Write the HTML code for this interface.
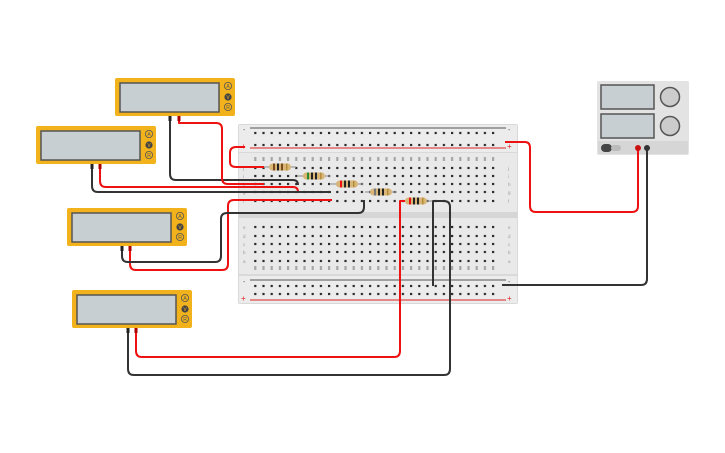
<!DOCTYPE html>
<html><head><style>html,body{margin:0;padding:0;background:#fff;width:725px;height:453px;overflow:hidden}</style></head>
<body>
<svg width="725" height="453" viewBox="0 0 725 453" xmlns="http://www.w3.org/2000/svg" font-family="Liberation Sans, sans-serif">
<defs>
<g id="meter">
<rect x="0" y="0" width="120" height="38" rx="2" fill="#f2b21c"/>
<rect x="5" y="5" width="99" height="29" fill="#c8cfd2" stroke="#555" stroke-width="1.5"/>
<circle cx="113" cy="8" r="3.6" fill="none" stroke="#555" stroke-width="0.8"/>
<text x="113" y="10" font-size="5" text-anchor="middle" fill="#555">A</text>
<circle cx="113" cy="19" r="3.6" fill="#444"/>
<text x="113" y="21" font-size="5" text-anchor="middle" fill="#f2b21c">V</text>
<circle cx="113" cy="29" r="3.6" fill="none" stroke="#555" stroke-width="0.8"/>
<text x="113" y="31" font-size="5" text-anchor="middle" fill="#555">R</text>
</g>
<g id="res">
<rect x="-11" y="-3.5" width="22" height="7" rx="3.5" fill="#d8b677"/>
<line x1="-16" y1="0" x2="-11" y2="0" stroke="#999" stroke-width="1.2"/>
<line x1="11" y1="0" x2="16" y2="0" stroke="#999" stroke-width="1.2"/>
</g>
<pattern id="hp" x="251.8" y="0" width="8.2" height="453" patternUnits="userSpaceOnUse">
<rect x="2.4" y="0" width="2.2" height="453" fill="#2a2a2a"/>
</pattern>
</defs>
<!-- breadboard -->
<rect x="238" y="124" width="280" height="180" rx="2" fill="#d9d9d9"/>
<rect x="239" y="153" width="278" height="121" fill="#e9e9e9"/>
<rect x="239" y="212" width="278" height="6" fill="#d6d6d6"/>
<rect x="239" y="125" width="278" height="27" fill="#ececec"/>
<rect x="239" y="276" width="278" height="27" fill="#ececec"/>
<line x1="250" y1="128" x2="506" y2="128" stroke="#555" stroke-width="1"/>
<line x1="250" y1="148" x2="506" y2="148" stroke="#d22" stroke-width="1"/>
<line x1="250" y1="280" x2="506" y2="280" stroke="#555" stroke-width="1"/>
<line x1="250" y1="300" x2="506" y2="300" stroke="#d22" stroke-width="1"/>
<g fill="#d22" font-size="8"><text x="241" y="149">+</text><text x="507" y="149">+</text><text x="241" y="301">+</text><text x="507" y="301">+</text></g>
<g fill="#555" font-size="7"><text x="243" y="132">-</text><text x="508" y="132">-</text><text x="243" y="284">-</text><text x="508" y="284">-</text></g>
<g fill="url(#hp)">
<rect x="252" y="131.9" width="246" height="2.2"/>
<rect x="252" y="143.9" width="246" height="2.2"/>
<rect x="252" y="166.9" width="246" height="2.2"/>
<rect x="252" y="174.9" width="246" height="2.2"/>
<rect x="252" y="182.9" width="246" height="2.2"/>
<rect x="252" y="190.9" width="246" height="2.2"/>
<rect x="252" y="199.9" width="246" height="2.2"/>
<rect x="252" y="225.9" width="246" height="2.2"/>
<rect x="252" y="234.9" width="246" height="2.2"/>
<rect x="252" y="242.9" width="246" height="2.2"/>
<rect x="252" y="250.9" width="246" height="2.2"/>
<rect x="252" y="259.9" width="246" height="2.2"/>
<rect x="252" y="284.9" width="246" height="2.2"/>
<rect x="252" y="292.9" width="246" height="2.2"/>
</g>
<g fill="#999" font-size="4.5">
<rect x="252" y="157" width="246" height="4" fill="url(#hp)" opacity="0.35"/>
<rect x="252" y="266" width="246" height="4" fill="url(#hp)" opacity="0.35"/>
<text x="243" y="170">j</text><text x="243" y="178">i</text><text x="243" y="186">h</text><text x="243" y="194">g</text><text x="243" y="203">f</text>
<text x="243" y="229">e</text><text x="243" y="238">d</text><text x="243" y="246">c</text><text x="243" y="254">b</text><text x="243" y="263">a</text>
<text x="508" y="170">j</text><text x="508" y="178">i</text><text x="508" y="186">h</text><text x="508" y="194">g</text><text x="508" y="203">f</text>
<text x="508" y="229">e</text><text x="508" y="238">d</text><text x="508" y="246">c</text><text x="508" y="254">b</text><text x="508" y="263">a</text>
</g>
<!-- resistors -->
<g transform="translate(280,167)"><use href="#res"/><rect x="-7" y="-3.5" width="2" height="7" fill="#7a4a1c"/><rect x="-3" y="-3.5" width="2" height="7" fill="#222"/><rect x="1" y="-3.5" width="2" height="7" fill="#7a4a1c"/><rect x="6" y="-3.5" width="1.5" height="7" fill="#b58d3a"/></g>
<g transform="translate(314,176)"><use href="#res"/><rect x="-7" y="-3.5" width="2" height="7" fill="#2a8a2a"/><rect x="-3" y="-3.5" width="2" height="7" fill="#222"/><rect x="1" y="-3.5" width="2" height="7" fill="#222"/><rect x="6" y="-3.5" width="1.5" height="7" fill="#b58d3a"/></g>
<g transform="translate(347,184)"><use href="#res"/><rect x="-7" y="-3.5" width="2" height="7" fill="#e11"/><rect x="-3" y="-3.5" width="2" height="7" fill="#222"/><rect x="1" y="-3.5" width="2" height="7" fill="#222"/><rect x="6" y="-3.5" width="1.5" height="7" fill="#b58d3a"/></g>
<g transform="translate(381,192)"><use href="#res"/><rect x="-7" y="-3.5" width="2" height="7" fill="#777"/><rect x="-3" y="-3.5" width="2" height="7" fill="#222"/><rect x="1" y="-3.5" width="2" height="7" fill="#222"/><rect x="6" y="-3.5" width="1.5" height="7" fill="#b58d3a"/></g>
<g transform="translate(416,201)"><use href="#res"/><rect x="-7" y="-3.5" width="2" height="7" fill="#e11"/><rect x="-3" y="-3.5" width="2" height="7" fill="#222"/><rect x="1" y="-3.5" width="2" height="7" fill="#222"/><rect x="6" y="-3.5" width="1.5" height="7" fill="#b58d3a"/></g>
<!-- meters -->
<use href="#meter" x="115" y="78"/>
<use href="#meter" x="36" y="126"/>
<use href="#meter" x="67" y="208"/>
<use href="#meter" x="72" y="290"/>
<!-- power supply -->
<rect x="597" y="81" width="92" height="74" rx="2" fill="#e3e3e3"/>
<rect x="598" y="141" width="90" height="13" fill="#d6d6d6"/>
<rect x="601" y="85" width="53" height="24" fill="#c8cfd2" stroke="#555" stroke-width="1.5"/>
<rect x="601" y="114" width="53" height="24" fill="#c8cfd2" stroke="#555" stroke-width="1.5"/>
<circle cx="670" cy="97" r="9.5" fill="#ccc" stroke="#555" stroke-width="1.5"/>
<circle cx="670" cy="126" r="9.5" fill="#ccc" stroke="#555" stroke-width="1.5"/>
<rect x="601" y="144" width="11" height="8" rx="4" fill="#444"/>
<rect x="611" y="145" width="10" height="6" rx="3" fill="#bbb"/>
<!-- wires -->
<g fill="none" stroke-width="2" stroke-linejoin="round">
<path d="M245 147 H236 Q230 147 230 153 V162 Q230 167 236 167 H264" stroke="#e11"/>
<path d="M505 142 H525 Q530 142 530 148 V206 Q530 212 536 212 H632 Q638 212 638 206 V148" stroke="#e11"/>
<path d="M647 148 V279 Q647 285 641 285 H502" stroke="#333"/>
<path d="M170 117 V174 Q170 180 176 180 H293 Q298 180 298 185" stroke="#333"/>
<path d="M179 117 V123 H216 Q222 123 222 129 V178 Q222 184 228 184 H264" stroke="#e11"/>
<path d="M100 164 V181 Q100 187 106 187 H293 Q298 187 298 192" stroke="#e11"/>
<path d="M92 164 V186 Q92 192 98 192 H331" stroke="#333"/>
<path d="M130 246 V264 Q130 270 136 270 H222 Q228 270 228 264 V206 Q228 200 234 200 H332" stroke="#e11"/>
<path d="M122 246 V256 Q122 262 128 262 H215 Q221 262 221 256 V219 Q221 213 227 213 H358 Q364 213 364 207 V200" stroke="#333"/>
<path d="M136 328 V351 Q136 357 142 357 H394 Q400 357 400 351 V201 H405" stroke="#e11"/>
<path d="M128 328 V369 Q128 375 134 375 H444 Q450 375 450 369 V207 Q450 201 444 201 H433 V286" stroke="#333"/>
</g>
<g stroke-width="3">
<line x1="170" y1="116" x2="170" y2="121" stroke="#222"/><line x1="179" y1="116" x2="179" y2="121" stroke="#a00"/>
<line x1="92" y1="164" x2="92" y2="169" stroke="#222"/><line x1="100" y1="164" x2="100" y2="169" stroke="#a00"/>
<line x1="122" y1="246" x2="122" y2="251" stroke="#222"/><line x1="130" y1="246" x2="130" y2="251" stroke="#a00"/>
<line x1="128" y1="328" x2="128" y2="333" stroke="#222"/><line x1="136" y1="328" x2="136" y2="333" stroke="#a00"/>
</g>
<circle cx="638" cy="148" r="3" fill="#c11"/><circle cx="647" cy="148" r="3" fill="#333"/>
</svg>
</body></html>
